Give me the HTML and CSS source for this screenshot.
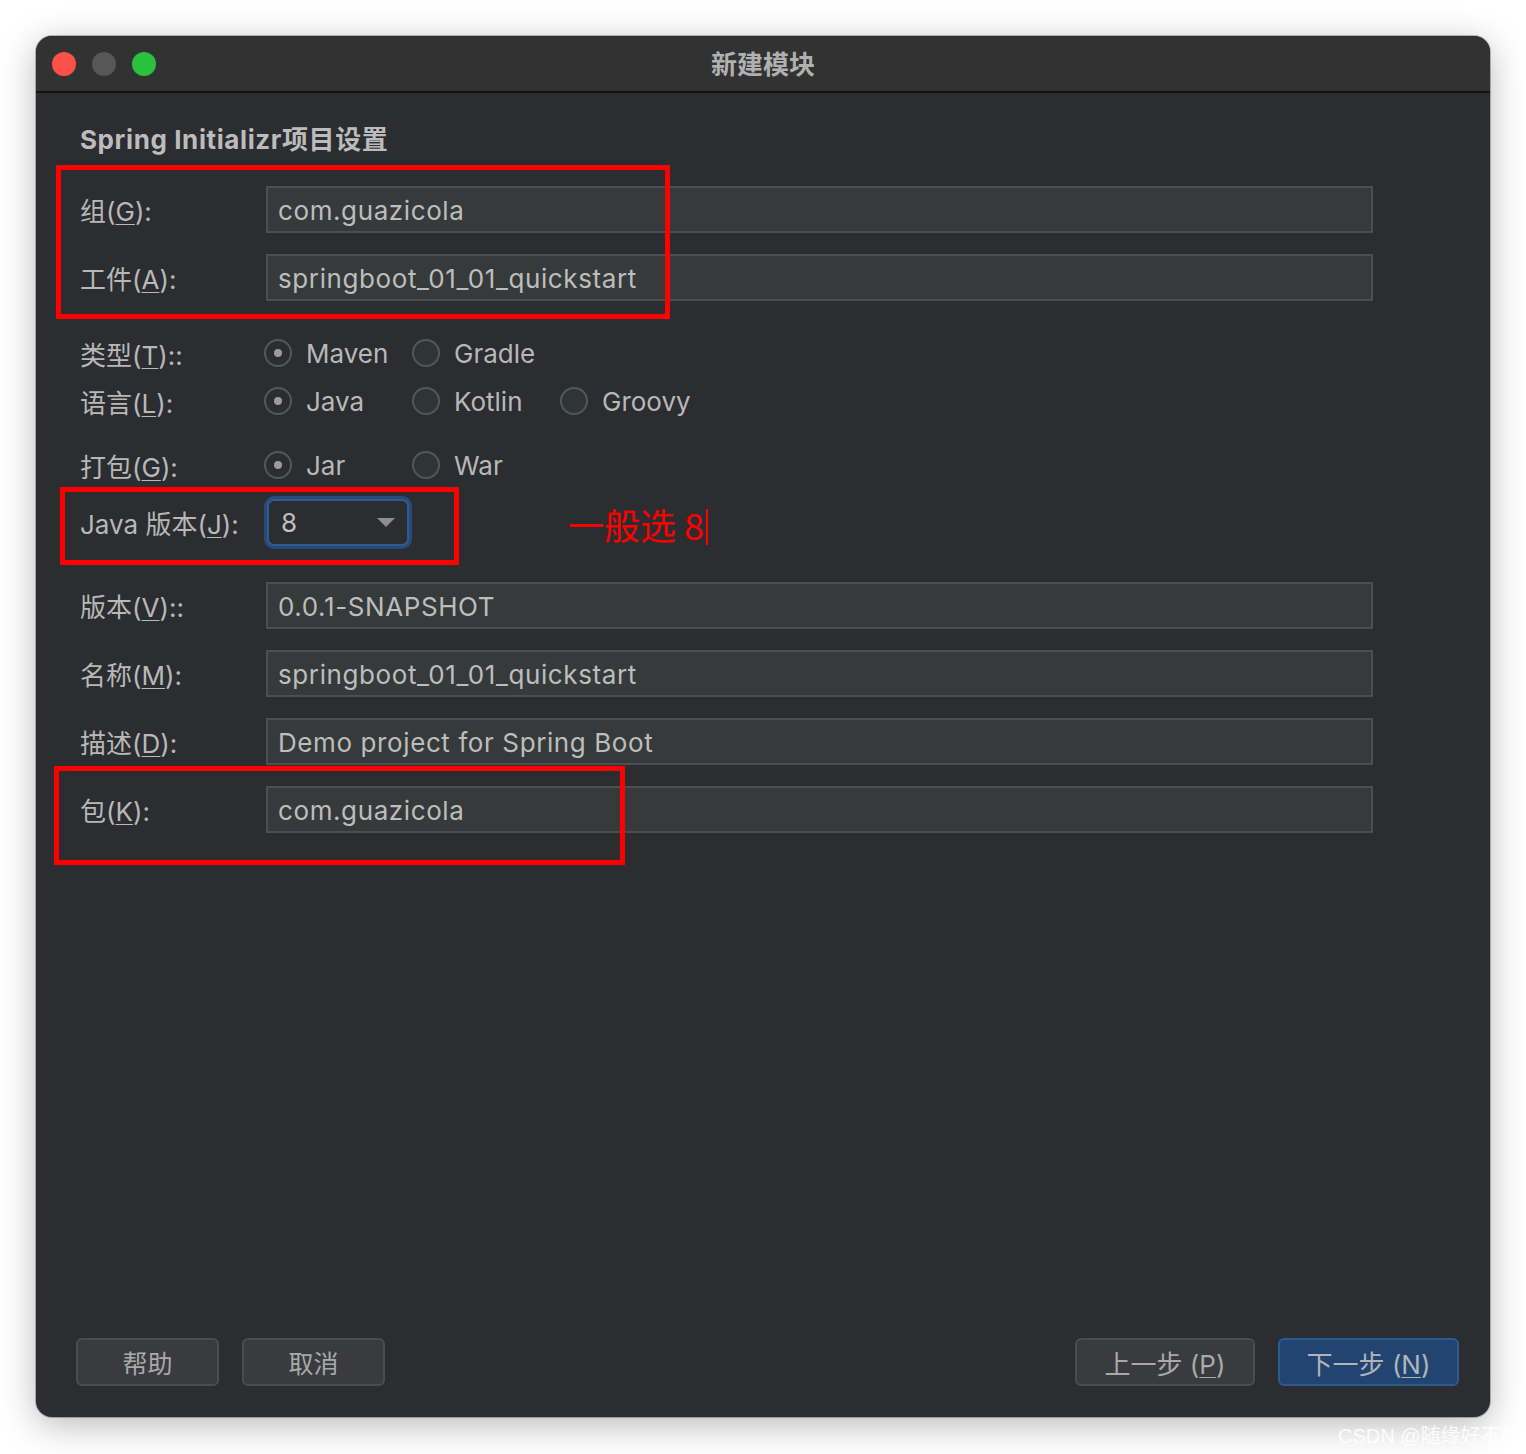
FILE: index.html
```html
<!DOCTYPE html>
<html lang="zh-CN">
<head>
    <meta charset="UTF-8">
    <meta name="viewport" content="width=device-width, initial-scale=1.0">
    <title>新建模块</title>
    <link rel="stylesheet" href="styles.css">
</head>
<body>
    <div class="window">
        <div class="titlebar">
            <div class="lights">
                <span class="light red"></span>
                <span class="light gray"></span>
                <span class="light green"></span>
            </div>
            <div class="title">新建模块</div>
        </div>

        <div class="content">
            <h1>Spring Initializr项目设置</h1>

            <div class="form">
                <div class="row field-row">
                    <label class="label">组(<u>G</u>):</label>
                    <div class="input">com.guazicola</div>
                </div>
                <div class="row field-row gap-s">
                    <label class="label">工件(<u>A</u>):</label>
                    <div class="input">springboot_01_01_quickstart</div>
                </div>

                <div class="row radio-row gap-l">
                    <label class="label">类型(<u>T</u>)::</label>
                    <div class="option"><span class="radio checked"></span>Maven</div>
                    <div class="option"><span class="radio"></span>Gradle</div>
                </div>
                <div class="row radio-row gap-xs">
                    <label class="label">语言(<u>L</u>):</label>
                    <div class="option"><span class="radio checked"></span>Java</div>
                    <div class="option"><span class="radio"></span>Kotlin</div>
                    <div class="option"><span class="radio"></span>Groovy</div>
                </div>
                <div class="row radio-row gap-m">
                    <label class="label">打包(<u>G</u>):</label>
                    <div class="option"><span class="radio checked"></span>Jar</div>
                    <div class="option"><span class="radio"></span>War</div>
                </div>

                <div class="row select-row">
                    <label class="label">Java 版本(<u>J</u>):</label>
                    <div class="select">
                        <span>8</span>
                        <span class="arrow"></span>
                    </div>
                </div>

                <div class="row field-row gap-xl">
                    <label class="label">版本(<u>V</u>)::</label>
                    <div class="input">0.0.1-SNAPSHOT</div>
                </div>
                <div class="row field-row gap-s">
                    <label class="label">名称(<u>M</u>):</label>
                    <div class="input">springboot_01_01_quickstart</div>
                </div>
                <div class="row field-row gap-s">
                    <label class="label">描述(<u>D</u>):</label>
                    <div class="input">Demo project for Spring Boot</div>
                </div>
                <div class="row field-row gap-s">
                    <label class="label">包(<u>K</u>):</label>
                    <div class="input">com.guazicola</div>
                </div>
            </div>
        </div>

        <div class="footer">
            <div class="btn-group">
                <button class="btn">帮助</button>
                <button class="btn">取消</button>
            </div>
            <div class="btn-group">
                <button class="btn wide">上一步 (<u>P</u>)</button>
                <button class="btn wide primary">下一步 (<u>N</u>)</button>
            </div>
        </div>

        <!-- red annotation marks drawn over the dialog -->
        <div class="mark mark-1"></div>
        <div class="mark mark-2"></div>
        <div class="mark mark-3"></div>
        <div class="note">一般选 8<span class="caret"></span></div>
    </div>

    <div class="watermark">CSDN @随缘好不好</div>
</body>
</html>
```

FILE: styles.css
```css
body {
    margin: 0;
    background: #ffffff;
    font-family: Inter, "Noto Sans CJK SC", sans-serif;
    position: relative;
    height: 1454px;
    overflow: hidden;
}
.window {
    position: relative;
    margin: 36px;
    width: 1454px;
    height: 1381px;
    background: #2b2d30;
    border-radius: 16px;
    box-shadow: 0 8px 36px rgba(0, 0, 0, 0.28), 0 0 0 1px rgba(0, 0, 0, 0.25);
    display: flex;
    flex-direction: column;
    overflow: hidden;
}

/* Title bar */
.titlebar {
    height: 55px;
    background: #323232;
    border-bottom: 2px solid #121212;
    display: flex;
    align-items: center;
    position: relative;
}
.lights {
    display: flex;
    gap: 16px;
    padding-left: 16px;
}
.light {
    width: 24px;
    height: 24px;
    border-radius: 50%;
}
.red { background: #fe5048; }
.gray { background: #575757; }
.green { background: #2ac13d; }
.title {
    position: absolute;
    left: 0;
    right: 0;
    top: 12px;
    text-align: center;
    color: #b0b0b0;
    font-size: 26px;
    line-height: 30px;
    font-weight: bold;
    font-family: "Noto Sans CJK SC", sans-serif;
    pointer-events: none;
}

/* Content */
.content {
    flex: 1;
    padding: 29px 117px 0 44px;
}
h1 {
    margin: 0;
    font-size: 26px;
    line-height: 36px;
    letter-spacing: 0.6px;
    font-weight: bold;
    color: #bcbcbc;
}
.form {
    margin-top: 28px;
    display: flex;
    flex-direction: column;
}
.row {
    display: flex;
    align-items: center;
    color: #b8b8b8;
    font-size: 26px;
}
.label {
    width: 186px;
    flex-shrink: 0;
}
u {
    text-underline-offset: 3px;
    text-decoration-thickness: 1px;
}
.field-row { height: 47px; }
.radio-row { height: 40px; }
.select-row { height: 52px; margin-top: 11px; }
.gap-xs { margin-top: 8px; }
.gap-s { margin-top: 21px; }
.gap-m { margin-top: 24px; }
.gap-l { margin-top: 32px; }
.gap-xl { margin-top: 34px; }

.input {
    flex: 1;
    height: 43px;
    line-height: 45px;
    background: #363a3b;
    border: 2px solid #4c4f52;
    padding-left: 10px;
    color: #bdbdbd;
    font-size: 26px;
    letter-spacing: 0.6px;
}

/* Radio buttons */
.option {
    width: 148px;
    display: flex;
    align-items: center;
    margin-left: -2px;
}
.option + .option { margin-left: 0; }
.radio {
    width: 24px;
    height: 24px;
    border: 2px solid #545759;
    border-radius: 50%;
    background: #2f3434;
    margin-right: 14px;
    position: relative;
    flex-shrink: 0;
}
.radio.checked {
    background: #2b2d30;
}
.radio.checked::after {
    content: "";
    position: absolute;
    left: 8px;
    top: 8px;
    width: 8px;
    height: 8px;
    border-radius: 50%;
    background: #9b9b9b;
}

/* Combo box */
.select {
    box-sizing: border-box;
    width: 142px;
    height: 47px;
    margin-left: 1px;
    border: 2px solid #2f5b8e;
    box-shadow: 0 0 0 3px #264b78;
    border-radius: 7px;
    background: #2b2d30;
    display: flex;
    align-items: center;
    justify-content: space-between;
    padding: 0 12px 0 12px;
    color: #c0c0c0;
}
.arrow {
    width: 0;
    height: 0;
    border-left: 9px solid transparent;
    border-right: 9px solid transparent;
    border-top: 9px solid #8e8e8e;
}

/* Footer */
.footer {
    display: flex;
    justify-content: space-between;
    padding: 0 31px 31px 40px;
}
.btn-group {
    display: flex;
    gap: 23px;
}
.btn {
    width: 143px;
    height: 48px;
    background: #393b3e;
    border: 2px solid #4a4d50;
    border-radius: 6px;
    color: #a9a9a9;
    font-family: Inter, "Noto Sans CJK SC", sans-serif;
    font-size: 25px;
    padding: 0;
}
.btn.wide { width: 180px; font-size: 26px; }
.btn.primary {
    width: 181px;
    background: #214570;
    border-color: #2d5c8c;
    color: #b0b4ba;
}

/* Annotations */
.mark {
    position: absolute;
    border: 5px solid #ff0000;
    box-sizing: border-box;
    pointer-events: none;
}
.mark-1 { left: 20px; top: 129px; width: 614px; height: 154px; }
.mark-2 { left: 24px; top: 451px; width: 399px; height: 78px; }
.mark-3 { left: 18px; top: 730px; width: 571px; height: 99px; }
.note {
    position: absolute;
    left: 532px;
    top: 467px;
    font-size: 36px;
    line-height: 40px;
    color: #ff0000;
    font-family: "Noto Sans CJK SC", sans-serif;
    display: flex;
    align-items: center;
}
.caret {
    display: inline-block;
    width: 2px;
    height: 36px;
    background: #ff0000;
    margin-left: 2px;
    margin-top: 6px;
}

.watermark {
    position: absolute;
    left: 1338px;
    top: 1420px;
    font-size: 20px;
    color: rgba(255, 255, 255, 0.9);
    font-family: "Liberation Sans", "Noto Sans CJK SC", sans-serif;
}
```
